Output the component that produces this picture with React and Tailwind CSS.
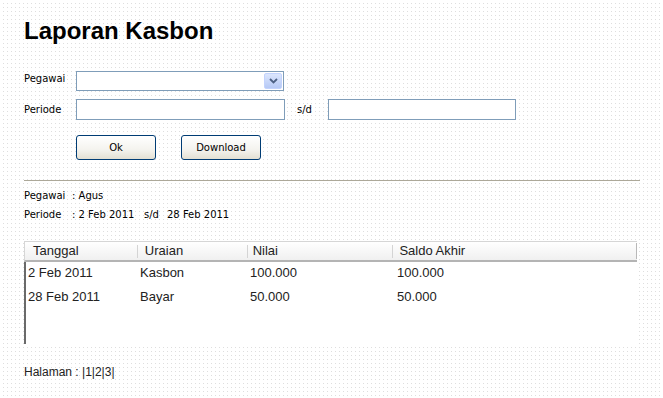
import React from "react";

const dots =
  "bg-[linear-gradient(to_right,#ffffff_3px,transparent_3px),linear-gradient(to_bottom,#ffffff_3px,#dedede_3px)] bg-[length:4px_4px]";

const tahoma = { fontFamily: '"DejaVu Sans", Verdana, sans-serif' };
const arial = { fontFamily: '"Liberation Sans", Arial, sans-serif' };

function Input({ w }) {
  return <div className={`${w} h-[21px] bg-white border border-[#7f9db9]`} />;
}

function Btn({ children }) {
  return (
    <div
      className="w-[80px] h-[25px] flex items-center justify-center rounded-[3px] border border-[#003c74] bg-[linear-gradient(to_bottom,#ffffff,#f4f3ee_60%,#e3e0d3)] text-[10px] text-black"
      style={tahoma}
    >
      {children}
    </div>
  );
}

const cols = ["w-[113px]", "w-[110px]", "w-[146px]", "w-[244px]"];
const headers = ["Tanggal", "Uraian", "Nilai", "Saldo Akhir"];
const headPad = ["pl-[8px]", "pl-[7px]", "pl-[5px]", "pl-[6px]"];
const bodyPad = ["pl-[2px]", "pl-[3px]", "pl-[3px]", "pl-[4px]"];
const rows = [
  ["2 Feb 2011", "Kasbon", "100.000", "100.000"],
  ["28 Feb 2011", "Bayar", "50.000", "50.000"],
];

export default function App() {
  return (
    <div className={`min-h-[398px] w-full ${dots} pl-[24px] pt-[19px] text-black`}>
      <h1 className="text-[24px] leading-[24px] font-bold" style={arial}>
        Laporan Kasbon
      </h1>

      <div className="mt-[28px] text-[10px]" style={tahoma}>
        <div className="flex items-center h-[20px]">
          <span className="w-[52px] -mt-[5px]">Pegawai</span>
          <div className="w-[208px] h-[20px] bg-white border border-[#7f9db9] flex justify-end items-center pr-[1px]">
            <div className="w-[18px] h-[16px] rounded-[2px] border border-[#c3d3fd] bg-[linear-gradient(to_bottom,#dce6fd,#b6c9f6)] flex items-center justify-center">
              <svg width="9" height="6" viewBox="0 0 9 6">
                <path d="M1 1 L4.5 4.5 L8 1" fill="none" stroke="#4d6185" strokeWidth="1.8" />
              </svg>
            </div>
          </div>
        </div>

        <div className="flex items-center h-[21px] mt-[8px]">
          <span className="w-[52px]">Periode</span>
          <Input w="w-[209px]" />
          <span className="w-[43px] pl-[12px]">s/d</span>
          <Input w="w-[188px]" />
        </div>

        <div className="flex mt-[15px] pl-[52px] gap-[25px]">
          <Btn>Ok</Btn>
          <Btn>Download</Btn>
        </div>
      </div>

      <div className="mt-[20px] w-[616px] h-px bg-[#aca899]" />

      <div className="text-[10px]" style={tahoma}>
        <div className="flex items-center h-[16px] mt-[6px]">
          <span className="w-[48px]">Pegawai</span>
          <span>: Agus</span>
        </div>
        <div className="flex items-center h-[16px] mt-[3px]">
          <span className="w-[48px]">Periode</span>
          <span className="w-[72px]">: 2 Feb 2011</span>
          <span className="w-[23px]">s/d</span>
          <span>28 Feb 2011</span>
        </div>
      </div>

      <div className="mt-[19px] w-[613px] text-[13px]" style={arial}>
        <div className="flex h-[21px] border-t border-l border-[#d6d6d6] border-b-2 border-b-[#b4b4b4] bg-[linear-gradient(to_bottom,#ffffff,#f0f0f0)]">
          {headers.map((h, i) => (
            <div key={h} className={`${cols[i]} flex items-center justify-between ${headPad[i]} text-[#222]`}>
              <span>{h}</span>
              <div className={`w-px ${i === 3 ? "h-[16px] bg-[#b8b8b8]" : "h-[13px] bg-[#d4d4d4]"}`} />
            </div>
          ))}
        </div>
        <div className="h-[82px] bg-white border-l-2 border-[#6a6a6a] flex flex-col gap-[4px] pt-[1px] text-[#222]">
          {rows.map((r) => (
            <div key={r[0]} className="flex h-[20px] items-center">
              {r.map((c, i) => (
                <div key={i} className={`${i === 0 ? "w-[111px]" : cols[i]} ${bodyPad[i]}`}>
                  {c}
                </div>
              ))}
            </div>
          ))}
        </div>
      </div>

      <div className="mt-[19px] text-[12px] text-[#222]" style={arial}>
        Halaman : |1|2|3|
      </div>
    </div>
  );
}
